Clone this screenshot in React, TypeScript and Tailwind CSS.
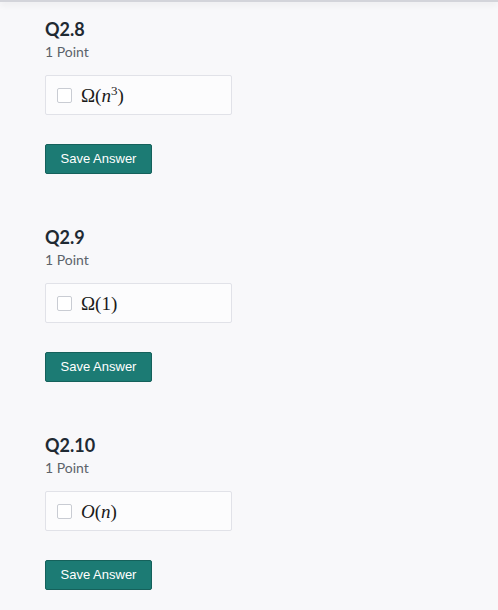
import React from "react";

function Q({ title, math }: { title: string; math: React.ReactNode }) {
  return (
    <div className="flex flex-col items-start">
      <div className="text-[18px] leading-[22px] font-bold text-[#1f2a33]" style={{ fontFamily: "Lato, 'Liberation Sans', sans-serif" }}>{title}</div>
      <div className="text-[14px] leading-[20px] text-[#5c636a] mt-[2px]" style={{ fontFamily: "Lato, 'Liberation Sans', sans-serif" }}>1 Point</div>
      <div className="mt-[13px] w-[187px] h-[40px] border border-[#e1e2e8] bg-[#fcfcfd] rounded-[2px] flex items-center pl-[11px]">
        <div className="w-[15px] h-[15px] border border-[#c9ccd3] bg-white rounded-[2px]" />
        <div className="ml-[9px] text-[19px] leading-none text-[#1a1a1a]" style={{ fontFamily: "'Liberation Serif', 'DejaVu Serif', serif" }}>{math}</div>
      </div>
      <button className="mt-[29px] w-[107px] h-[30px] bg-[#1c7b74] border border-[#15615b] rounded-[2px] text-white text-[13px]" style={{ fontFamily: "'Liberation Sans', Arial, sans-serif" }}>Save Answer</button>
    </div>
  );
}

export default function App() {
  return (
    <div className="w-[498px] h-[610px] bg-[#f8f8fa] overflow-hidden relative">
      <div className="h-[2px] bg-[#d3d4da] shadow-[0_2px_6px_rgba(0,0,0,0.12)]" />
      <div className="pl-[45px] pt-[16px] flex flex-col gap-[52px]">
        <Q title="Q2.8" math={<span>Ω(<i>n</i><sup className="text-[13px]">3</sup>)</span>} />
        <Q title="Q2.9" math={<span>Ω(1)</span>} />
        <Q title="Q2.10" math={<span><i>O</i>(<i>n</i>)</span>} />
      </div>
    </div>
  );
}
